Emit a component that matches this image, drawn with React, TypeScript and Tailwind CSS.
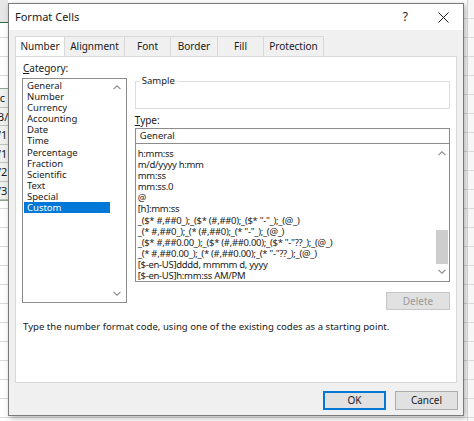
import React from 'react';

const categories = [
  'General',
  'Number',
  'Currency',
  'Accounting',
  'Date',
  'Time',
  'Percentage',
  'Fraction',
  'Scientific',
  'Text',
  'Special',
  'Custom',
];

const formats = [
  'h:mm:ss',
  'm/d/yyyy h:mm',
  'mm:ss',
  'mm:ss.0',
  '@',
  '[h]:mm:ss',
  '_($* #,##0_);_($* (#,##0);_($* "-"_);_(@_)',
  '_(* #,##0_);_(* (#,##0);_(* "-"_);_(@_)',
  '_($* #,##0.00_);_($* (#,##0.00);_($* "-"??_);_(@_)',
  '_(* #,##0.00_);_(* (#,##0.00);_(* "-"??_);_(@_)',
  '[$-en-US]dddd, mmmm d, yyyy',
  '[$-en-US]h:mm:ss AM/PM',
];

const tabs = [
  { label: 'Number', w: 'w-[50px]' },
  { label: 'Alignment', w: 'w-[60px]' },
  { label: 'Font', w: 'w-[46px]' },
  { label: 'Border', w: 'w-[47px]' },
  { label: 'Fill', w: 'w-[46px]' },
  { label: 'Protection', w: 'w-[60px]' },
];

const Chevron = ({ down = false }: { down?: boolean }) => (
  <svg width="8" height="5" viewBox="0 0 8 5" className="block">
    <path
      d={down ? 'M0.5 0.8 L4 4.2 L7.5 0.8' : 'M0.5 4.2 L4 0.8 L7.5 4.2'}
      fill="none"
      stroke="#8a8a8a"
      strokeWidth="1.1"
    />
  </svg>
);

const App = () => {
  return (
    <div
      className="flex w-[474px] h-[421px] overflow-hidden bg-white text-[9.5px] text-[#1a1a1a] bg-[repeating-linear-gradient(180deg,transparent_0px,transparent_18px,#dadada_18px,#dadada_19px)]"
      style={{ fontFamily: '"Noto Sans", "Open Sans", sans-serif' }}
    >
      {/* spreadsheet peeking out on the left */}
      <div className="w-[8px] shrink-0 flex flex-col">
        <div className="h-[23px] bg-[#e6e6e6] border-b border-[#217346]" />
        <div className="h-[65px]" />
        <div className="flex flex-col border-y border-[#8aa88f] bg-[#eef1ee] text-[11px] leading-[18.5px] overflow-hidden">
          {['ic', 'B/', '/1', '/1', '/2', '/3'].map((t, i) => (
            <div key={i} className="h-[18.5px] border-b border-[#b9c4b9] whitespace-nowrap overflow-hidden">
              <span className="block -ml-[3px]">{t}</span>
            </div>
          ))}
        </div>
      </div>

      {/* dialog */}
      <div className="mt-[3px] w-[456px] h-[413px] shrink-0 flex flex-col bg-[#f0f0f0] border border-[#7a7a7a] shadow-[2px_2px_6px_rgba(0,0,0,0.3)]">
        {/* title bar */}
        <div className="h-[26px] bg-white flex items-center pl-[6px] pr-[14px] shrink-0">
          <span className="text-[11px] flex-1">Format Cells</span>
          <span className="text-[12px] mr-[30px]">?</span>
          <svg width="11" height="11" viewBox="0 0 11 11">
            <path d="M0.5 0.5 L10.5 10.5 M10.5 0.5 L0.5 10.5" stroke="#1a1a1a" strokeWidth="1" />
          </svg>
        </div>

        {/* tabs */}
        <div className="flex pl-[6px] mt-[6px] h-[20px] shrink-0 text-[10px]">
          {tabs.map((t, i) => (
            <div
              key={t.label}
              className={`${t.w} flex items-center justify-center border-t border-r border-[#d9d9d9] ${
                i === 0 ? 'bg-white border-l' : 'bg-[#f0f0f0]'
              }`}
            >
              {t.label}
            </div>
          ))}
        </div>

        {/* panel */}
        <div className="mx-[6px] h-[327px] shrink-0 bg-white border border-[#d9d9d9] px-[6px] flex flex-col">
          <div className="flex gap-[8px] mt-[5px]">
            {/* category column */}
            <div className="w-[105px] flex flex-col">
              <div className="h-[16px] pl-[1px] leading-[12px] text-[10px]">
                <span className="underline">C</span>ategory:
              </div>
              <div className="h-[225px] border border-[#8c8c8c] flex p-[1px]">
                <div className="flex-1 flex flex-col">
                  {categories.map((c) => (
                    <div
                      key={c}
                      className={`h-[11.1px] leading-[11.1px] pl-[3px] ${
                        c === 'Custom' ? 'bg-[#0078d7] text-white' : ''
                      }`}
                    >
                      {c}
                    </div>
                  ))}
                </div>
                <div className="w-[15px] flex flex-col items-center justify-between py-[5px]">
                  <Chevron />
                  <Chevron down />
                </div>
              </div>
            </div>

            {/* type column */}
            <div className="w-[316px] flex flex-col pt-[19px]">
              <div className="relative h-[28px] border border-[#dcdcdc]">
                <span className="absolute -top-[7px] left-[4px] bg-white px-[2px] leading-[12px]">Sample</span>
              </div>
              <div className="h-[16px] mt-[3px] leading-[16px] text-[10px]">
                <span className="underline">T</span>ype:
              </div>
              <div className="h-[16px] border border-[#8c8c8c] pl-[4px] leading-[14px]">General</div>
              <div className="h-[138px] border border-t-0 border-[#8c8c8c] flex">
                <div className="flex-1 flex flex-col pt-[4px] pl-[2px] tracking-[-0.3px]">
                  {formats.map((f) => (
                    <div key={f} className="h-[11.1px] leading-[11.1px] whitespace-nowrap">
                      {f}
                    </div>
                  ))}
                </div>
                <div className="w-[15px] flex flex-col items-center py-[7px]">
                  <Chevron />
                  <div className="flex-1" />
                  <div className="w-[12px] h-[34px] bg-[#cdcdcd] mb-[5px]" />
                  <Chevron down />
                </div>
              </div>
              <div className="flex justify-end mt-[10px]">
                <div className="w-[64px] h-[18px] flex items-center justify-center bg-[#e1e1e1] border border-[#c6c6c6] text-[#9a9a9a] text-[10px]">
                  Delete
                </div>
              </div>
            </div>
          </div>
          <div className="mt-[10px] pl-[1px] text-[9.6px]">
            Type the number format code, using one of the existing codes as a starting point.
          </div>
        </div>

        {/* footer */}
        <div className="flex justify-end gap-[9px] pr-[5px] mt-[8px] text-[10px]">
          <div className="w-[63px] h-[19px] flex items-center justify-center bg-[#e1e1e1] border-2 border-[#0078d7]">
            OK
          </div>
          <div className="w-[63px] h-[19px] flex items-center justify-center bg-[#e1e1e1] border border-[#adadad]">
            Cancel
          </div>
        </div>
      </div>

      {/* spreadsheet on the right */}
      <div className="flex-1 bg-[#f7f7f7] border-l border-[#cfcfcf] ml-[3px] bg-[repeating-linear-gradient(180deg,transparent_0px,transparent_18px,#dadada_18px,#dadada_19px)]" />
    </div>
  );
};

export default App;
